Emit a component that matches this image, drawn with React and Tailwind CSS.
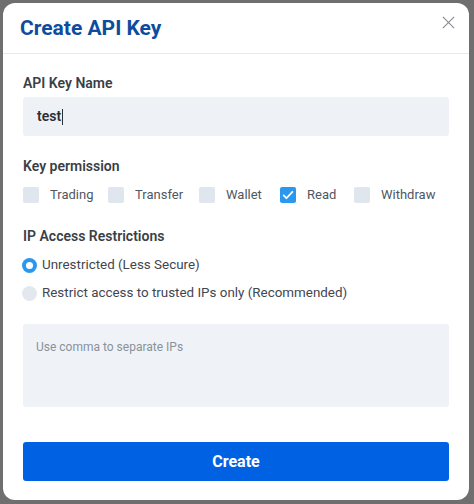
import { useState } from "react";

// widths keep each checkbox where the reference puts it
const PERMS = [
  { name: "Trading", w: "w-[85px]" },
  { name: "Transfer", w: "w-[91px]" },
  { name: "Wallet", w: "w-[81px]" },
  { name: "Read", w: "w-[74px]" },
  { name: "Withdraw", w: "w-auto" },
];

function Checkbox({ checked }) {
  return (
    <span
      className={`flex h-4 w-4 shrink-0 items-center justify-center rounded-[2px] ${
        checked ? "bg-[#2b98ef]" : "bg-[#dfe6ee]"
      }`}
    >
      {checked && (
        <svg viewBox="0 0 16 16" className="h-3.5 w-3.5" fill="none">
          <path
            d="M3 8.5l3.2 3.2L13 4.5"
            stroke="white"
            strokeWidth="2"
            strokeLinecap="round"
            strokeLinejoin="round"
          />
        </svg>
      )}
    </span>
  );
}

function Radio({ checked }) {
  return checked ? (
    <span className="flex h-[15px] w-[15px] shrink-0 items-center justify-center rounded-full bg-[#2b98ef]">
      <span className="h-[7px] w-[7px] rounded-full bg-white" />
    </span>
  ) : (
    <span className="h-[15px] w-[15px] shrink-0 rounded-full bg-[#e3e8ef]" />
  );
}

export default function App() {
  const [perms, setPerms] = useState({ Read: true });
  const [mode, setMode] = useState("open");

  return (
    <div className="h-[504px] w-[474px] bg-[#6f6f6f] p-[3px] font-['Roboto',sans-serif]">
      <div className="flex h-[497px] w-[466px] flex-col overflow-hidden rounded-[12px] bg-white">
        {/* Header */}
        <div className="flex h-[51px] items-center justify-between border-b border-[#e6e9ee] pl-[17px] pr-[13px]">
          <h1 className="mt-[2px] text-[21px] font-bold text-[#0e4c9e]">Create API Key</h1>
          <button className="-mt-3 text-[#8a8f96]">
            <svg viewBox="0 0 16 16" className="h-[15px] w-[15px]" fill="none">
              <path d="M2 2l12 12M14 2L2 14" stroke="currentColor" strokeWidth="1.3" />
            </svg>
          </button>
        </div>

        {/* Body */}
        <div className="flex flex-col px-[20px] pt-[19px]">
          <label className="text-[14px] font-semibold leading-5 text-[#3a3f47]">
            API Key Name
          </label>
          <div className="mt-[4px] flex h-[39px] items-center rounded-[3px] bg-[#eef2f6] px-[14px] text-[14px] font-semibold text-[#2a2f36]">
            test<span className="ml-[1px] h-[16px] w-[1px] bg-[#2a2f36]" />
          </div>

          <label className="mt-[20px] text-[14px] font-semibold leading-5 text-[#3a3f47]">
            Key permission
          </label>
          <div className="mt-[11px] flex h-4 items-center text-[13px] text-[#505761]">
            {PERMS.map((p) => (
              <button
                key={p.name}
                onClick={() => setPerms((s) => ({ ...s, [p.name]: !s[p.name] }))}
                className={`flex items-center gap-[11px] ${p.w}`}
              >
                <Checkbox checked={!!perms[p.name]} />
                <span>{p.name}</span>
              </button>
            ))}
          </div>

          <label className="mt-[23px] text-[14px] font-semibold leading-5 text-[#3a3f47]">
            IP Access Restrictions
          </label>
          <div className="mt-[9px] flex flex-col gap-[8px] text-[13.4px] leading-5 text-[#3f4650]">
            <button onClick={() => setMode("open")} className="-ml-px flex items-center gap-[5px]">
              <Radio checked={mode === "open"} />
              Unrestricted (Less Secure)
            </button>
            <button onClick={() => setMode("ips")} className="-ml-px flex items-center gap-[5px]">
              <Radio checked={mode === "ips"} />
              Restrict access to trusted IPs only (Recommended)
            </button>
          </div>

          <textarea
            placeholder="Use comma to separate IPs"
            className="mt-[21px] h-[83px] resize-none rounded-[3px] bg-[#eff3f7] px-[13px] py-[14px] text-[12px] text-[#3a3f47] outline-none placeholder:text-[#8a919b]"
          />

          <button className="mt-[35px] h-[39px] rounded-[3px] bg-[#0062e3] text-[16px] font-bold text-white">
            Create
          </button>
        </div>
      </div>
    </div>
  );
}
